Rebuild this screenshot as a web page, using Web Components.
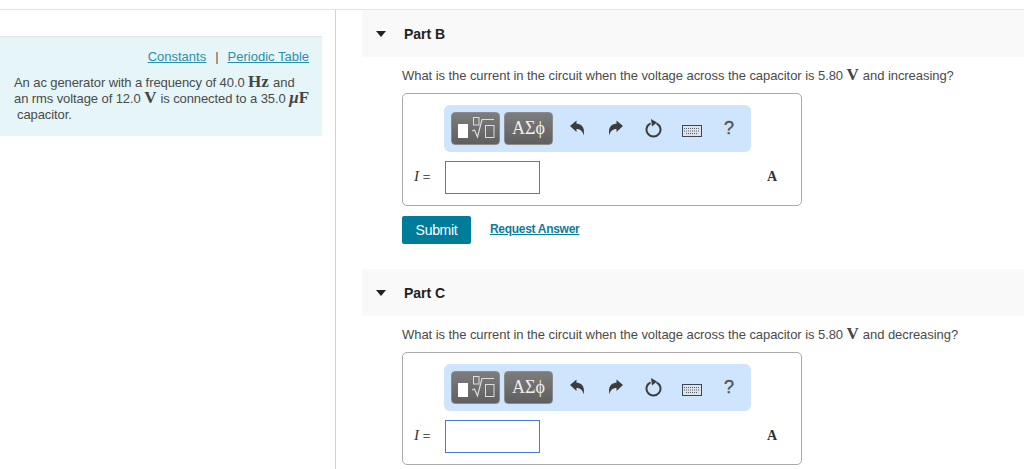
<!DOCTYPE html>
<html>
<head>
<meta charset="utf-8">
<style>
    html, body { margin: 0; padding: 0; background: #fff; height: 469px; overflow: hidden; }
    body { font-family: "Liberation Sans", Arial, sans-serif; color: #3f3f3f; }
</style>
</head>
<body>
<quiz-page>
    <info-panel slot="side">
        An ac generator with a frequency of 40.0 <m-unit>Hz</m-unit> and<br>an rms voltage of 12.0 <m-unit>V</m-unit> is connected to a 35.0 <m-unit><i>μ</i>F</m-unit><br><span style="margin-left:3px">capacitor.</span>
    </info-panel>
    <quiz-part label="Part B" with-actions>
        What is the current in the circuit when the voltage across the capacitor is 5.80 <m-unit>V</m-unit> and increasing?
    </quiz-part>
    <quiz-part label="Part C">
        What is the current in the circuit when the voltage across the capacitor is 5.80 <m-unit>V</m-unit> and decreasing?
    </quiz-part>
</quiz-page>

<script>
class MUnit extends HTMLElement {
    constructor() {
        super();
        this.attachShadow({ mode: 'open' });
        this.shadowRoot.innerHTML = `
            <style>
                :host {
                    display: inline;
                    font-family: "Liberation Serif", "Times New Roman", serif;
                    font-size: 17px;
                    font-weight: bold;
                    letter-spacing: 0;
                    color: #444;
                    line-height: 0;
                }
            </style>
            <slot></slot>
        `;
    }
}

class QuizPage extends HTMLElement {
    constructor() {
        super();
        this.attachShadow({ mode: 'open' });
        this.shadowRoot.innerHTML = `
            <style>
                :host {
                    display: flex;
                    box-sizing: border-box;
                    height: 469px;
                    margin-top: 9px;
                    border-top: 1px solid #e2e2e2;
                }
                .side {
                    box-sizing: content-box;
                    width: 335px;
                    flex: none;
                    border-right: 1px solid #c9d3e2;
                    padding-top: 26px;
                }
                .main {
                    flex: 1;
                    padding-left: 26px;
                    min-width: 0;
                }
            </style>
            <div class="side"><slot name="side"></slot></div>
            <div class="main"><slot></slot></div>
        `;
    }
}

class InfoPanel extends HTMLElement {
    constructor() {
        super();
        this.attachShadow({ mode: 'open' });
        this.shadowRoot.innerHTML = `
            <style>
                :host {
                    display: block;
                    box-sizing: border-box;
                    width: 322px;
                    height: 100px;
                    background: #e6f6f8;
                    border-top: 1px solid #e2e6e6;
                    padding: 12px 0 0 14px;
                    font-size: 13px;
                    line-height: 16px;
                    letter-spacing: -0.09px;
                    white-space: nowrap;
                    color: #4a4a4a;
                }
                .links {
                    text-align: right;
                    margin: 0 13px 10px 0;
                    letter-spacing: 0;
                    color: #555;
                }
                a { color: #2a8fab; text-decoration: underline; }
                .sep { margin: 0 9px; }
            </style>
            <div class="links"><a href="#">Constants</a><span class="sep">|</span><a href="#">Periodic Table</a></div>
            <slot></slot>
        `;
    }
}

class MathToolbar extends HTMLElement {
    constructor() {
        super();
        this.attachShadow({ mode: 'open' });
        this.shadowRoot.innerHTML = `
            <style>
                :host {
                    display: flex;
                    align-items: center;
                    box-sizing: border-box;
                    width: 307px;
                    height: 47px;
                    padding-left: 7px;
                    background: #cfe5fd;
                    border-radius: 6px;
                    color: #444;
                }
                .btn {
                    box-sizing: border-box;
                    width: 49px;
                    height: 33px;
                    margin-right: 4px;
                    border-radius: 4px;
                    border: 1px solid #8b8b8b;
                    background: linear-gradient(#7d7d7d, #5f5f5f);
                    display: flex;
                    align-items: center;
                    justify-content: center;
                    color: #eee;
                }
                .greek { font: 18px "Liberation Serif", serif; }
                svg { display: block; flex: none; }
                .tools { display: flex; align-items: center; }
                .q { font-size: 18px; width: 12px; text-align: center; color: #555; -webkit-text-stroke: 0.4px #555; }
            </style>
            <div class="btn">
                <svg width="47" height="31" viewBox="0 0 47 31" fill="none">
                    <rect x="6" y="11" width="10" height="14" fill="#fff"/>
                    <rect x="21.500" y="4.500" width="5.500" height="7.500" stroke="#ddd"/>
                    <path d="M20 18 L22.500 17 L25.500 24 L30 6.500 H42" stroke="#ddd" stroke-width="1.200"/>
                    <rect x="33.500" y="12.500" width="8.500" height="12" stroke="#ddd"/>
                </svg>
            </div>
            <div class="btn greek">ΑΣϕ</div>
            <div class="tools">
                <svg style="margin-left:13px;margin-top:-2px" width="15" height="16" viewBox="0 0 15 16"><path fill="#3c3c3c" d="M0 6 L6.500 0.500 V3.800 C11 3.800 15.500 7 13.500 15.500 C13 11.500 10.500 9 6.500 9 V12 Z"/></svg>
                <svg style="margin-left:23px;margin-top:-2px" width="15" height="16" viewBox="0 0 15 16"><path fill="#3c3c3c" d="M15 6 L8.500 0.500 V3.800 C4 3.800 -0.500 7 1.500 15.500 C2 11.500 4.500 9 8.500 9 V12 Z"/></svg>
                <svg style="margin-left:22px" width="17" height="19" viewBox="0 0 17 19" fill="none"><path stroke="#3c3c3c" stroke-width="2" d="M5.500 4.300 A7 7 0 1 0 11.500 4.300"/><path fill="#3c3c3c" d="M6 0 L12 3.500 L7 7.500 Z"/></svg>
                <svg style="margin-left:20px;margin-top:4px" width="20" height="12" viewBox="0 0 20 12" fill="none"><rect x="0.500" y="0.500" width="19" height="11" fill="#dfe3e8" stroke="#3c4654"/><path stroke="#56606c" stroke-dasharray="1 1" d="M2 3.500 H18 M2 6 H18 M4 8.500 H16"/></svg>
                <div class="q" style="margin-left:21px">?</div>
            </div>
        `;
    }
}

class AnswerBox extends HTMLElement {
    constructor() {
        super();
        this.attachShadow({ mode: 'open' });
        this.shadowRoot.innerHTML = `
            <style>
                :host {
                    display: block;
                    box-sizing: border-box;
                    width: 400px;
                    height: 113px;
                    border: 1px solid #a9a9a9;
                    border-radius: 5px;
                    padding: 11px 0 0 41px;
                }
                .row {
                    display: flex;
                    align-items: center;
                    margin-top: 9px;
                    height: 33px;
                    margin-left: -30px;
                }
                .var { font: italic 15px "Liberation Serif", serif; color: #333; width: 31px; white-space: pre; margin-top: -2px; }
                .var span { font: 13px "Liberation Sans", sans-serif; color: #555; }
                .input {
                    box-sizing: border-box;
                    width: 95px;
                    height: 33px;
                    border: 1px solid #4a78d6;
                    background: #fff;
                }
                .unit {
                    margin-left: auto;
                    margin-right: 24px;
                    margin-top: -2px;
                    font: bold 14px "Liberation Serif", serif;
                    color: #333;
                }
            </style>
            <math-toolbar></math-toolbar>
            <div class="row">
                <div class="var">I <span>=</span></div>
                <div class="input"></div>
                <div class="unit">A</div>
            </div>
        `;
    }
}

class QuizPart extends HTMLElement {
    constructor() {
        super();
        this.attachShadow({ mode: 'open' });
        this.shadowRoot.innerHTML = `
            <style>
                :host { display: block; margin-bottom: 25px; }
                .head {
                    display: flex;
                    align-items: center;
                    box-sizing: border-box;
                    height: 47px;
                    background: #f9f9f9;
                    font-size: 14px;
                    font-weight: bold;
                    color: #222;
                    padding-top: 1px;
                }
                .arrow {
                    width: 0;
                    height: 0;
                    margin: -1px 18px 0 14px;
                    border-left: 5px solid transparent;
                    border-right: 5px solid transparent;
                    border-top: 6px solid #222;
                }
                .text {
                    margin: 11px 0 0 40px;
                    height: 25px;
                    font-size: 13px;
                    letter-spacing: -0.06px;
                    line-height: 16px;
                    color: #4a4a4a;
                }
                answer-box { margin-left: 40px; }
                .actions {
                    display: flex;
                    align-items: center;
                    margin: 10px 0 0 40px;
                }
                .submit {
                    box-sizing: border-box;
                    width: 69px;
                    height: 28px;
                    background: #007c9b;
                    color: #fff;
                    border-radius: 2px;
                    font-size: 14px;
                    letter-spacing: -0.3px;
                    display: flex;
                    align-items: center;
                    justify-content: center;
                }
                a {
                    margin-left: 19px;
                    font-size: 12px;
                    font-weight: bold;
                    letter-spacing: -0.3px;
                    color: #0b7c9c;
                    text-decoration: underline;
                    margin-top: -2px;
                }
            </style>
            <div class="head"><span class="arrow"></span><span class="label"></span></div>
            <div class="text"><slot></slot></div>
            <answer-box></answer-box>
            <div class="actions">
                <div class="submit">Submit</div>
                <a href="#">Request Answer</a>
            </div>
        `;
    }

    connectedCallback() {
        this.shadowRoot.querySelector('.label').textContent = this.getAttribute('label') || 'Part';
        if (!this.hasAttribute('with-actions')) {
            this.shadowRoot.querySelector('.actions').style.display = 'none';
        }
    }
}

customElements.define('m-unit', MUnit);
customElements.define('quiz-page', QuizPage);
customElements.define('info-panel', InfoPanel);
customElements.define('math-toolbar', MathToolbar);
customElements.define('answer-box', AnswerBox);
customElements.define('quiz-part', QuizPart);
</script>
</body>
</html>
